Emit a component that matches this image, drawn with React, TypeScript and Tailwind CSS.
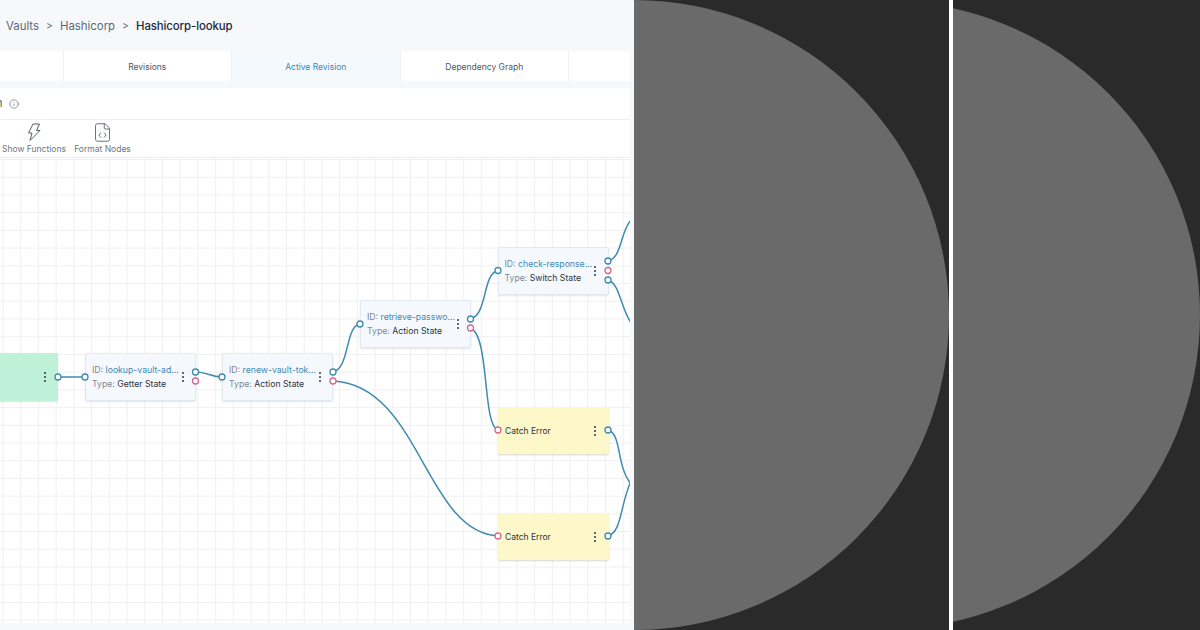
import { FileCode, Info } from 'lucide-react';
import type { ReactNode } from 'react';

const BLUE = '#3f8bb0';
const RED = '#d8688f';

const edges = [
  'M58 377 L85 377',
  'M195.5 372 C208 372 210 377 222 377',
  'M333 372 C350 368 345 326 360 324',
  'M333 381 C420 385 425 532 498 536',
  'M470.5 319 C488 314 482 274 498 270.5',
  'M470.5 328 C490 336 482 425 498 430',
  'M608 261 C622 258 620 232 631 220',
  'M608 280 C620 284 620 306 631 323',
  'M608 430 C622 434 616 466 631 484',
  'M608 536 C622 532 620 505 631 481',
];

const ports: [number, number, string][] = [
  [58, 377, BLUE],
  [85, 377, BLUE],
  [195.5, 372, BLUE],
  [195.5, 381, RED],
  [222, 377, BLUE],
  [333, 372, BLUE],
  [333, 381, RED],
  [360, 324, BLUE],
  [470.5, 319, BLUE],
  [470.5, 328, RED],
  [498, 270.5, BLUE],
  [608, 261, BLUE],
  [608, 270.5, RED],
  [608, 280, BLUE],
  [498, 430, RED],
  [608, 430, BLUE],
  [498, 536, RED],
  [608, 536, BLUE],
];

function Dots() {
  return (
    <div className="flex flex-col gap-[2px]">
      <span className="size-[2px] rounded-full bg-[#2f3a46]" />
      <span className="size-[2px] rounded-full bg-[#2f3a46]" />
      <span className="size-[2px] rounded-full bg-[#2f3a46]" />
    </div>
  );
}

function StateNode({ id, type, className }: { id: string; type: string; className: string }) {
  return (
    <div className={`absolute flex h-[48px] w-[111px] items-center justify-between rounded-[2px] border border-[#e3e9f0] bg-[#f5f9fd] pl-[6px] pr-[11.5px] shadow-[0_1px_2px_rgba(30,50,80,0.12)] ${className}`}>
      <div className="flex flex-col gap-[3px] text-[8.7px] leading-[11px] whitespace-nowrap">
        <div className="text-[#7d8896]">
          ID: <span className="text-[#3c88b6]">{id}</span>
        </div>
        <div className="text-[#7d8896]">
          Type: <span className="text-[#2b3440]">{type}</span>
        </div>
      </div>
      <Dots />
    </div>
  );
}

function CatchNode({ className }: { className: string }) {
  return (
    <div className={`absolute flex h-[47px] w-[111px] items-center justify-between rounded-[2px] bg-[#fcf8ca] pl-[7.5px] pr-[13px] pt-[1px] text-[8.5px] text-[#2b3440] shadow-[0_1px_2px_rgba(60,50,20,0.2)] ${className}`}>
      Catch Error
      <Dots />
    </div>
  );
}

function Tab({ children, active }: { children?: ReactNode; active?: boolean }) {
  return (
    <div className={`flex h-full w-[168.5px] shrink-0 items-center justify-center border-r border-[#eff1f4] pt-[2px] text-[8.5px] ${active ? 'bg-[#f4f9fd] text-[#3c88b6]' : 'text-[#4d5763]'}`}>
      {children}
    </div>
  );
}

function ToolButton({ icon, label, className }: { icon: ReactNode; label: string; className: string }) {
  return (
    <div className={`flex flex-col items-center gap-[2px] ${className}`}>
      <div className="flex h-[20px] items-center">{icon}</div>
      <span className="text-[8.5px] leading-[11px] whitespace-nowrap text-[#6d7784]">{label}</span>
    </div>
  );
}

function CirclePanel({ className, cx, r, width }: { className: string; cx: number; r: number; width: number }) {
  return (
    <div className={`h-full shrink-0 overflow-hidden bg-[#2a2a2a] ${className}`}>
      <svg width={width} height={630} viewBox={`0 0 ${width} 630`} className="block">
        <circle cx={cx} cy={315} r={r} fill="#6a6a6a" />
      </svg>
    </div>
  );
}

export default function App() {
  return (
    <div className="flex h-[630px] w-[1200px] overflow-hidden bg-white font-['Inter',sans-serif]">
      <div className="flex h-full w-[634px] shrink-0 flex-col bg-[#f7f8fa] pr-[4px]">
        {/* breadcrumb */}
        <div className="flex h-[51px] shrink-0 items-center gap-[7px] pl-[6px] pt-[1.5px] text-[11.4px] text-[#5c6875]">
          <span>Vaults</span>
          <span className="text-[10.5px]">&gt;</span>
          <span>Hashicorp</span>
          <span className="text-[10.5px]">&gt;</span>
          <span className="font-medium tracking-[-0.1px] text-[#1b2a3a]">Hashicorp-lookup</span>
        </div>

        {/* tabs */}
        <div className="flex h-[30px] shrink-0 bg-white">
          <div className="h-full w-[63.5px] shrink-0 border-r border-[#eff1f4]" />
          <Tab>Revisions</Tab>
          <Tab active>Active Revision</Tab>
          <Tab>Dependency Graph</Tab>
        </div>

        <div className="mt-[7px] flex h-[32px] shrink-0 items-center gap-[6px] overflow-hidden border-b border-[#eceef1] bg-white">
          <span className="-ml-[4px] text-[11px] text-[#4d5763]">n</span>
          <Info size={10} strokeWidth={1.5} className="text-[#5c6875]" />
        </div>

        {/* toolbar */}
        <div className="flex h-[38px] shrink-0 items-start border-b border-[#eceef1] bg-white pt-[2px] pl-[2px]">
          <ToolButton
            className="w-[64px]"
            label="Show Functions"
            icon={
              <svg width="14" height="19" viewBox="0 0 14 19" fill="none" stroke="#56616e" strokeWidth="1" strokeLinejoin="round">
                <path d="M6 1 L12.5 1 L9.5 7.5 L13 7.5 L3 17.5 L5 10 L1.5 10 Z" />
              </svg>
            }
          />
          <ToolButton
            className="ml-[8px] w-[57px]"
            label="Format Nodes"
            icon={<FileCode size={21} strokeWidth={1} className="text-[#56616e]" />}
          />
        </div>

        {/* graph canvas */}
        <div className="relative flex-1 overflow-hidden bg-white bg-[linear-gradient(to_right,#eef0f3_1px,transparent_1px),linear-gradient(to_bottom,#eef0f3_1px,transparent_1px)] bg-[size:17.72px_17.72px] bg-[position:2.5px_1px]">
          <div className="absolute -left-[60px] top-[195px] flex h-[48px] w-[118px] items-center justify-end rounded-[2px] bg-[#bff0d8] pr-[12px] shadow-[0_1px_2px_rgba(30,80,50,0.15)]">
            <Dots />
          </div>
          <StateNode className="left-[85px] top-[195px]" id="lookup-vault-ad..." type="Getter State" />
          <StateNode className="left-[222px] top-[195px]" id="renew-vault-tok..." type="Action State" />
          <StateNode className="left-[360px] top-[142px]" id="retrieve-passwo..." type="Action State" />
          <StateNode className="left-[497.5px] top-[89px]" id="check-response..." type="Switch State" />
          <CatchNode className="left-[497.5px] top-[249px]" />
          <CatchNode className="left-[497.5px] top-[355px]" />
          <svg className="absolute inset-0" width="630" height="465" viewBox="0 158 630 465">
            {edges.map(d => (
              <path key={d} d={d} fill="none" stroke={BLUE} strokeWidth="1.5" />
            ))}
            {ports.map(([x, y, color]) => (
              <circle key={`${x}-${y}`} cx={x} cy={y} r="3" fill="white" stroke={color} strokeWidth="1.3" />
            ))}
          </svg>
        </div>
        <div className="h-[7px] shrink-0" />
      </div>

      <CirclePanel className="w-[315px]" width={315} cx={0} r={315} />
      <div className="w-[4px] shrink-0 bg-white" />
      <CirclePanel className="w-[247px]" width={247} cx={-67} r={314} />
    </div>
  );
}
